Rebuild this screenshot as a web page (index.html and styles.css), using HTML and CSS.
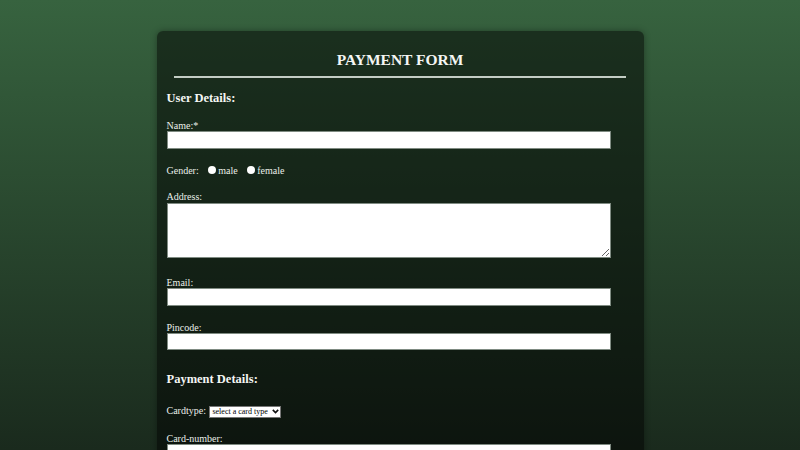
FILE: index.html
```html
<!DOCTYPE html>
<html lang="en">
<head>
    <meta charset="UTF-8">
    <meta name="viewport" content="width=device-width, initial-scale=1.0">
    <title>Payment Form</title>
    <link rel="stylesheet" href="styles.css">
</head>
<body>
    <div class="container">
        <h2>PAYMENT FORM</h2>
        <hr>
        <form>
            <h3>User Details:</h3>
            <div class="field first">
                <label for="name">Name:*</label>
                <input type="text" id="name">
            </div>
            <div class="gender">
                Gender:
                <input type="radio" name="gender" id="male"><label for="male">male</label>
                <input type="radio" name="gender" id="female"><label for="female">female</label>
            </div>
            <div class="field address">
                <label for="address">Address:</label>
                <textarea id="address"></textarea>
            </div>
            <div class="field after-area">
                <label for="email">Email:</label>
                <input type="email" id="email">
            </div>
            <div class="field">
                <label for="pincode">Pincode:</label>
                <input type="text" id="pincode">
            </div>

            <h3 class="section">Payment Details:</h3>
            <div class="cardtype">
                Cardtype:
                <span class="select-wrap">
                    <select id="cardtype">
                        <option>select a card type</option>
                        <option>Visa</option>
                        <option>MasterCard</option>
                        <option>RuPay</option>
                    </select>
                    <svg class="chevron" width="7" height="5" viewBox="0 0 7 5"><path d="M0.8 0.9 L3.5 3.6 L6.2 0.9" fill="none" stroke="#111" stroke-width="1.6"/></svg>
                </span>
            </div>
            <div class="field card">
                <label for="cardnumber">Card-number:</label>
                <input type="text" id="cardnumber">
            </div>
        </form>
    </div>
</body>
</html>
```

FILE: styles.css
```css
body{
    margin: 0;
    min-height: 100vh;
    background: linear-gradient(#37633f, #1a2a1d) fixed;
    font-family: "Liberation Serif", "Times New Roman", serif;
    color: #eaefea;
}
.container{
    width: 487px;
    box-sizing: border-box;
    margin: 31px auto;
    padding: 20px 10px 40px;
    background-color: rgba(0, 0, 0, 0.5);
    border-radius: 6px;
    box-shadow: 0 0 6px rgba(0, 0, 0, 0.35);
}
h2{
    margin: 0;
    font-size: 15.5px;
    line-height: 18px;
    text-align: center;
    color: #f4f6f4;
}
hr{
    width: 452px;
    height: 2px;
    border: none;
    background-color: #c3cdc4;
    margin: 7px auto 13px;
}
h3{
    margin: 0;
    font-size: 12.5px;
    line-height: 15px;
    color: #f4f6f4;
}
.section{
    margin-top: 22px;
}
.field, .gender, .cardtype{
    font-size: 10px;
    line-height: 11px;
    margin-top: 16px;
}
.field label{
    display: block;
}
.field input, .field textarea{
    display: block;
    width: 444px;
    height: 17.5px;
    box-sizing: border-box;
    margin: 0;
    padding: 0 3px;
    border: 1px solid #7f8b82;
    border-radius: 0;
    background-color: #fff;
    font-family: inherit;
}
.first{
    margin-top: 14px;
}
.gender{
    margin-top: 16.5px;
}
.gender input{
    appearance: none;
    width: 8px;
    height: 8px;
    margin: 0 2px 0 7px;
    border-radius: 50%;
    background-color: #fff;
    vertical-align: 0;
}
.address{
    margin-top: 14.5px;
}
.field textarea{
    height: 55.5px;
    margin-top: 1px;
}
.after-area{
    margin-top: 19px;
}
.cardtype{
    margin-top: 18px;
}
.select-wrap{
    position: relative;
    display: inline-block;
    margin-left: 1px;
}
.cardtype select{
    appearance: none;
    width: 72px;
    height: 12px;
    box-sizing: border-box;
    font-family: inherit;
    font-size: 8px;
    line-height: 10px;
    margin: 0;
    padding: 0 10px 0 2px;
    border: 1px solid #767676;
    border-radius: 0;
    background-color: #fff;
    color: #000;
}
.chevron{
    position: absolute;
    right: 2px;
    top: 4px;
    pointer-events: none;
}
.card{
    margin-top: 15px;
}
```
